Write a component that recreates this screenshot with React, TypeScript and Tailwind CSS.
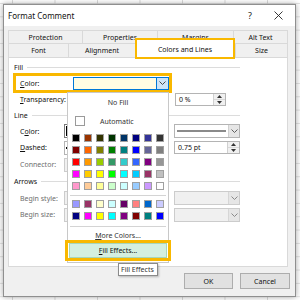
import React from "react";

const mainColors = [
  ["#000000", "#993300", "#333300", "#003300", "#003366", "#000080", "#333399", "#333333"],
  ["#800000", "#FF6600", "#808000", "#008000", "#008080", "#0000FF", "#666699", "#808080"],
  ["#FF0000", "#FF9900", "#99CC00", "#339966", "#33CCCC", "#3366FF", "#800080", "#969696"],
  ["#FF00FF", "#FFCC00", "#FFFF00", "#00FF00", "#00FFFF", "#00CCFF", "#993366", "#C0C0C0"],
  ["#FF99CC", "#FFCC99", "#FFFF99", "#CCFFCC", "#CCFFFF", "#99CCFF", "#CC99FF", "#FFFFFF"],
];
const recentColors = [
  ["#9999FF", "#993366", "#FFFFCC", "#CCFFFF", "#660066", "#FF8080", "#0066CC", "#CCCCFF"],
  ["#000080", "#FF00FF", "#FFFF00", "#00FFFF", "#800080", "#800000", "#008080", "#0000FF"],
];

function Chevron({ color = "#606060" }: { color?: string }) {
  return (
    <svg width="7" height="4" viewBox="0 0 7 4">
      <path d="M0.5 0.5 L3.5 3.5 L6.5 0.5" fill="none" stroke={color} strokeWidth="1" />
    </svg>
  );
}

function Spin() {
  return (
    <div className="w-[12px] h-full flex flex-col border-l border-[#d0d0d0] bg-[#f0f0f0]">
      <div className="flex-1 flex items-center justify-center border-b border-[#d8d8d8]">
        <svg width="5" height="3" viewBox="0 0 5 3">
          <path d="M0 3 L2.5 0 L5 3Z" fill="#333" />
        </svg>
      </div>
      <div className="flex-1 flex items-center justify-center">
        <svg width="5" height="3" viewBox="0 0 5 3">
          <path d="M0 0 L2.5 3 L5 0Z" fill="#333" />
        </svg>
      </div>
    </div>
  );
}

function Swatches({ rows }: { rows: string[][] }) {
  return (
    <div className="grid grid-cols-[repeat(8,8px)] gap-x-[4px] gap-y-[4px] pl-[4px]">
      {rows.flat().map((c, i) => (
        <div key={i} className="w-[8px] h-[8px] border border-[#a0a0a0]" style={{ backgroundColor: c }} />
      ))}
    </div>
  );
}

function SectionHeader({ label, h }: { label: string; h: string }) {
  return (
    <div className={`flex items-center pl-[5px] pr-[47px] ${h}`}>
      <span>{label}</span>
      <div className="flex-1 h-px bg-[#dcdcdc] ml-[4px]" />
    </div>
  );
}

function DisabledDrop({ w }: { w: string }) {
  return (
    <div className={`${w} h-[14px] flex border border-[#cccccc] bg-[#f0f0f0]`}>
      <div className="flex-1" />
      <div className="w-[11px] flex items-center justify-center border-l border-[#d6d6d6] bg-[#e6e6e6]">
        <Chevron color="#8a8a8a" />
      </div>
    </div>
  );
}

export default function App() {
  return (
    <div className="relative w-[300px] h-[300px] overflow-hidden bg-white bg-[linear-gradient(to_right,#dadada_1px,transparent_1px),linear-gradient(to_bottom,#e2e2e2_1px,transparent_1px)] bg-size-[42.5px_13.33px] bg-position-[12px_3px] pt-[4px] pl-[3px] font-['Noto_Sans','Open_Sans',sans-serif] text-[7px] leading-none text-[#111]">
      {/* Dialog */}
      <div className="w-[293px] h-[293px] bg-[#f0f0f0] border border-[#8f8f8f] shadow-[0_0_6px_rgba(0,0,0,0.35)] flex flex-col">
        {/* Title bar */}
        <div className="h-[21px] bg-white flex items-center pl-[4px] pr-[3px] text-[8px] shrink-0">
          <span className="mt-[1px]">Format Comment</span>
          <div className="flex-1" />
          <div className="w-[28px] flex justify-center text-[9px] text-[#222]">?</div>
          <div className="w-[28px] flex justify-center">
            <svg width="9" height="9" viewBox="0 0 9 9">
              <path d="M0.5 0.5 L8.5 8.5 M8.5 0.5 L0.5 8.5" stroke="#222" strokeWidth="0.9" />
            </svg>
          </div>
        </div>

        {/* Tabs */}
        <div className="ml-[4px] mt-[4px] w-[280px] shrink-0">
          <div className="flex h-[14px]">
            {[
              ["Protection", "w-[74px]"],
              ["Properties", "w-[75px]"],
              ["Margins", "w-[76px]"],
              ["Alt Text", "w-[55px]"],
            ].map(([t, w]) => (
              <div key={t} className={`${w} flex items-center justify-center border border-r-0 last:border-r border-[#d9d9d9] bg-[#f0f0f0]`}>
                {t}
              </div>
            ))}
          </div>
          <div className="flex h-[13px]">
            {[
              ["Font", "w-[60px]"],
              ["Alignment", "w-[67px]"],
              ["", "w-[100px]"],
              ["Size", "w-[53px]"],
            ].map(([t, w], i) => (
              <div key={i} className={`${w} flex items-center justify-center border-l border-b-0 border-[#d9d9d9] last:border-r bg-[#f0f0f0]`}>
                {t}
              </div>
            ))}
          </div>
        </div>

        {/* Panel */}
        <div className="ml-[4px] w-[280px] h-[210px] bg-white border border-[#d9d9d9] shrink-0 pt-[1px]">
          <SectionHeader label="Fill" h="h-[16px]" />
          <div className="flex items-center h-[16px] pl-[11px]">
            <div className="w-[53px]">
              <span className="underline underline-offset-[1px]">C</span>olor:
            </div>
            <div className="w-[84px] h-[13px] border border-[#0078d7] bg-[#fffde3]" />
            <div className="w-[12px] h-[13px] border border-l-0 border-[#0078d7] bg-[#cce4f7] flex items-center justify-center">
              <Chevron color="#4a4a4a" />
            </div>
          </div>
          <div className="flex items-center h-[16px] pl-[11px]">
            <div className="w-[155px]">
              <span className="underline underline-offset-[1px]">T</span>ransparency:
            </div>
            <div className="w-[51px] h-[13px] flex border border-[#b4b4b4] bg-white">
              <div className="flex-1 flex items-center pl-[3px]">0 %</div>
              <Spin />
            </div>
          </div>
          <SectionHeader label="Line" h="h-[16px]" />
          <div className="flex items-center h-[16px] pl-[11px]">
            <div className="w-[44px]">
              C<span className="underline underline-offset-[1px]">o</span>lor:
            </div>
            <div className="w-[95px] h-[14px] border border-[#7a7a7a] bg-white p-[1px]">
              <div className="w-[60px] h-full bg-black" />
            </div>
            <div className="w-[15px]" />
            <div className="w-[66px] h-[14px] flex border border-[#b4b4b4] bg-white">
              <div className="flex-1 flex items-center px-[2px]">
                <div className="w-full h-[2px] bg-[#8a8a8a]" />
              </div>
              <div className="w-[11px] flex items-center justify-center border-l border-[#d0d0d0] bg-[#e6e6e6]">
                <Chevron />
              </div>
            </div>
          </div>
          <div className="flex items-center h-[17px] pl-[11px]">
            <div className="w-[44px]">
              <span className="underline underline-offset-[1px]">D</span>ashed:
            </div>
            <div className="w-[95px] h-[14px] border border-[#b4b4b4] bg-white flex items-center pl-[1px]">
              <div className="w-[2px] h-[2px] bg-black" />
            </div>
            <div className="w-[15px]" />
            <div className="w-[66px] h-[13px] flex border border-[#b4b4b4] bg-white">
              <div className="flex-1 flex items-center pl-[3px]">0.75 pt</div>
              <Spin />
            </div>
          </div>
          <div className="flex items-center h-[17px] pl-[11px] text-[#6d6d6d]">
            <div className="w-[44px]">Connector:</div>
            <DisabledDrop w="w-[95px]" />
          </div>
          <SectionHeader label="Arrows" h="h-[17px]" />
          <div className="flex items-center h-[16px] pl-[11px]">
            <div className="w-[44px] text-[#6d6d6d]">Begin style:</div>
            <DisabledDrop w="w-[95px]" />
            <div className="w-[15px]" />
            <DisabledDrop w="w-[66px]" />
          </div>
          <div className="flex items-center h-[17px] pl-[11px]">
            <div className="w-[44px] text-[#6d6d6d]">Begin size:</div>
            <DisabledDrop w="w-[95px]" />
            <div className="w-[15px]" />
            <DisabledDrop w="w-[66px]" />
          </div>
        </div>

        {/* Buttons */}
        <div className="flex justify-end gap-[7px] pr-[5px] mt-[6px]">
          <div className="w-[49px] h-[16px] flex items-center justify-center bg-[#e1e1e1] border border-[#adadad]">OK</div>
          <div className="w-[50px] h-[16px] flex items-center justify-center bg-[#e1e1e1] border border-[#adadad]">Cancel</div>
        </div>
      </div>

      {/* Selected tab (highlighted) */}
      <div className="absolute left-[135px] top-[38px] w-[100px] h-[21px] bg-white border-2 border-[#f9b800] flex justify-center pt-[6px]">
        Colors and Lines
      </div>

      {/* Color row highlight */}
      <div className="absolute left-[13px] top-[73px] w-[159px] h-[20px] border-[3px] border-[#f9b800]" />

      {/* Color popup */}
      <div className="absolute left-[67px] top-[92px] w-[102px] h-[171px] bg-white border border-[#c8c8c8] flex flex-col">
        <div className="h-[18px] flex items-center justify-center text-[#333]">No Fill</div>
        <div className="h-[18px] mt-[1px] flex items-center">
          <div className="ml-[7px] w-[10px] h-[10px] border border-[#9a9a9a] bg-white" />
          <span className="ml-[15px] text-[#333]">Automatic</span>
        </div>
        <div className="mt-[4px]">
          <Swatches rows={mainColors} />
        </div>
        <div className="mt-[5px] h-px bg-[#d4d4d4] mx-[2px]" />
        <div className="mt-[4px]">
          <Swatches rows={recentColors} />
        </div>
        <div className="mt-[6px] h-px bg-[#d4d4d4] mx-[2px]" />
        <div className="h-[16px] flex items-center justify-center text-[#333]">
          <span>
            <span className="underline underline-offset-[1px]">M</span>ore Colors...
          </span>
        </div>
        <div className="mx-[1px] h-[15px] bg-[#d4efdf] border border-[#a6d6b9] flex items-center justify-center">
          <span>
            <span className="underline underline-offset-[1px]">F</span>ill Effects...
          </span>
        </div>
      </div>

      {/* Fill Effects highlight */}
      <div className="absolute left-[65px] top-[240px] w-[106px] h-[21px] border-[3px] border-[#f9b800]" />

      {/* Tooltip */}
      <div className="absolute left-[118px] top-[263px] w-[40px] h-[13px] bg-white border border-[#8a8a8a] shadow-[1px_1px_2px_rgba(0,0,0,0.25)] flex items-center pl-[2px] text-[#333]">
        Fill Effects
      </div>
    </div>
  );
}
